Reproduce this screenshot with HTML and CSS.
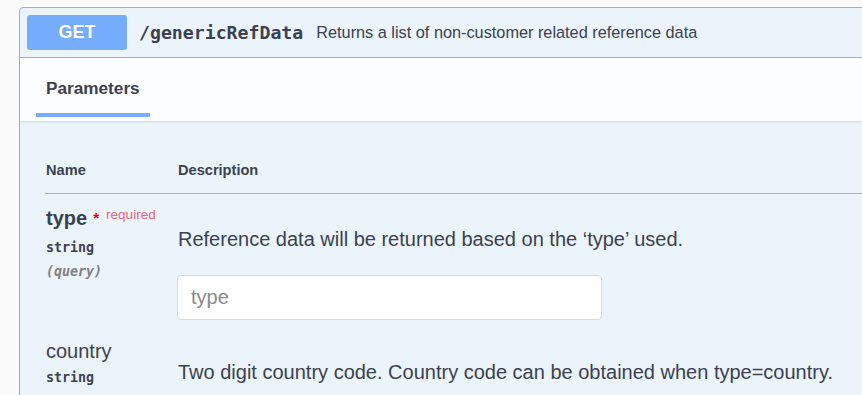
FILE: index.html
```html
<!DOCTYPE html>
<html lang="en">
<head>
  <meta charset="UTF-8">
  <title>genericRefData</title>
  <link rel="stylesheet" href="styles.css">
</head>
<body>
  <div class="wrap">
    <div class="opblock">
      <div class="opblock-summary">
        <span class="method">GET</span>
        <span class="path">/genericRefData</span>
        <span class="summary">Returns a list of non-customer related reference data</span>
      </div>

      <div class="section-header">
        <div class="tab">Parameters</div>
      </div>

      <div class="section-body">
        <table class="params">
          <thead>
            <tr>
              <th class="col-name">Name</th>
              <th>Description</th>
            </tr>
          </thead>
          <tbody>
            <tr>
              <td class="col-name">
                <div class="param-name required">type<span class="star">*</span><span class="req">required</span></div>
                <div class="param-type">string</div>
                <div class="param-in">(query)</div>
              </td>
              <td>
                <p class="desc">Reference data will be returned based on the ‘type’ used.</p>
                <input type="text" class="param-input" placeholder="type">
              </td>
            </tr>
            <tr>
              <td class="col-name">
                <div class="param-name">country</div>
                <div class="param-type">string</div>
              </td>
              <td>
                <p class="desc">Two digit country code. Country code can be obtained when type=country.</p>
              </td>
            </tr>
          </tbody>
        </table>
      </div>
    </div>
  </div>
</body>
</html>
```

FILE: styles.css
```css
html, body {
  margin: 0;
  padding: 0;
  overflow: hidden;
}

body {
  font-family: "Liberation Sans", Arial, sans-serif;
  background-color: #fafafa;
  color: #3b4151;
}

.wrap {
  padding: 7px 0 0 19px;
}

.opblock {
  margin-right: -20px;
  border: 1px solid #86b5f6;
  border-radius: 4px;
  background-color: #ebf3fb;
  height: 400px;
}

.opblock-summary {
  display: flex;
  align-items: center;
  padding: 7px;
  border-bottom: 1px solid #86b5f6;
}

.method {
  display: inline-block;
  width: 100px;
  height: 35px;
  line-height: 35px;
  text-align: center;
  background-color: #76acfc;
  color: #fff;
  font-weight: bold;
  font-size: 18px;
  border-radius: 3px;
}

.path {
  margin-left: 12px;
  font-family: "DejaVu Sans Mono", monospace;
  font-weight: bold;
  font-size: 18.2px;
  color: #3b4151;
}

.summary {
  margin-left: 13px;
  font-size: 16.3px;
  color: #3b4151;
}

.section-header {
  background-color: #fcfdff;
  padding: 0 0 4px 16px;
  box-shadow: 0 1px 2px rgba(0, 0, 0, 0.12);
}

.tab {
  width: 104px;
  padding: 20px 0 15px 10px;
  line-height: 20px;
  font-size: 17.2px;
  font-weight: bold;
  border-bottom: 4px solid #78adfd;
}

.section-body {
  padding-left: 25px;
}

.params {
  width: 100%;
  border-collapse: collapse;
}

.params th {
  text-align: left;
  font-size: 14.6px;
  font-weight: bold;
  line-height: 18px;
  padding: 40px 0 14px 1px;
  border-bottom: 1px solid #aab0bc;
}

.params td {
  vertical-align: top;
  padding: 12px 0 7px 0;
}

.params .col-name {
  width: 131px;
  padding-left: 1px;
}

.param-name {
  font-size: 20px;
  line-height: 24px;
}

.param-name.required {
  font-weight: bold;
}

.star {
  color: #f00;
  font-size: 15px;
  margin-left: 6px;
  position: relative;
  top: -2px;
}

.req {
  font-weight: normal;
  font-size: 13.6px;
  color: #f3657a;
  margin-left: 7px;
  position: relative;
  top: -6px;
}

.param-type {
  margin-top: 3px;
  font-family: "DejaVu Sans Mono", monospace;
  font-weight: bold;
  font-size: 13.3px;
  line-height: 24px;
}

.param-in {
  font-family: "DejaVu Sans Mono", monospace;
  font-style: italic;
  font-weight: bold;
  font-size: 13.3px;
  line-height: 24px;
  color: #808080;
}

.desc {
  margin: 21px 0 0 1px;
  font-size: 20px;
  line-height: 24px;
}

.param-input {
  display: block;
  margin-top: 24px;
  width: 425px;
  height: 45px;
  box-sizing: border-box;
  border: 1px solid #d9d9d9;
  border-radius: 4px;
  padding: 0 13px;
  font-family: "Liberation Sans", Arial, sans-serif;
  font-size: 20px;
  background-color: #fff;
  color: #3b4151;
  outline: none;
}

.param-input::placeholder {
  color: #8a8a8a;
}
```
